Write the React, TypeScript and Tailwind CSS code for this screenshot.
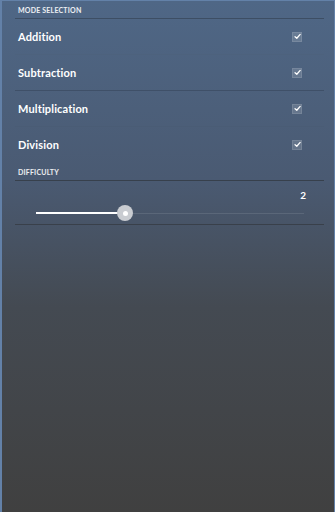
import React from "react";

function Check() {
  return (
    <div className="w-[10px] h-[10px] bg-white/15 border border-white/10 flex items-center justify-center">
      <svg width="10" height="9" viewBox="0 0 10 9" className="-mt-[2px] ml-[1px]">
        <path d="M1.5 4.8 L4 7 L8.8 1.5" stroke="white" strokeWidth="1.8" fill="none" strokeLinecap="round" strokeLinejoin="round" />
      </svg>
    </div>
  );
}

function Row({ label, divider }: { label: string; divider: string }) {
  return (
    <div className={`h-[36px] flex items-center justify-between pl-[3px] pr-[22px] pt-[1px] ${divider}`}>
      <span className="text-[11px] font-bold text-white tracking-[0.15px]">{label}</span>
      <Check />
    </div>
  );
}

export default function App() {
  return (
    <div
      className="w-[335px] h-[512px] overflow-hidden border-l-2 border-t border-r border-[#6381a8] bg-[linear-gradient(to_bottom,#4f6786_0%,#4a5a72_35%,#444a52_60%,#404040_100%)]"
      style={{ fontFamily: "Lato, 'Open Sans', sans-serif" }}
    >
      <div className="pl-[13px] pr-[10px]">
        <div className="h-[18px] flex items-center pl-[3px] pt-[1px] border-b border-[#3d4e64]">
          <span className="text-[7px] font-bold text-white/90 uppercase tracking-[0.2px]">Mode Selection</span>
        </div>
        <Row label="Addition" divider="border-b border-[#4d627d]" />
        <Row label="Subtraction" divider="border-b border-[#3f5068]" />
        <Row label="Multiplication" divider="border-b border-[#4a5c75]" />
        <Row label="Division" divider="border-b border-transparent" />
        <div className="h-[18px] flex items-center pl-[3px] pt-[1px] border-b border-[#37404c]">
          <span className="text-[7px] font-bold text-white/90 uppercase tracking-[0.2px]">Difficulty</span>
        </div>
        <div className="h-[44px] border-b border-[#39404a] relative">
          <div className="absolute right-[18px] top-[7px] text-[10px] font-bold text-white">2</div>
          <div className="absolute left-[21px] right-[20px] top-[32px] h-px bg-white/10" />
          <div className="absolute left-[21px] w-[90px] top-[31px] h-[2px] bg-white" />
          <div className="absolute left-[102px] top-[24px] w-[16px] h-[16px] rounded-full bg-[#c9ccd1] flex items-center justify-center">
            <div className="w-[5px] h-[5px] rounded-full bg-white" />
          </div>
        </div>
      </div>
    </div>
  );
}
